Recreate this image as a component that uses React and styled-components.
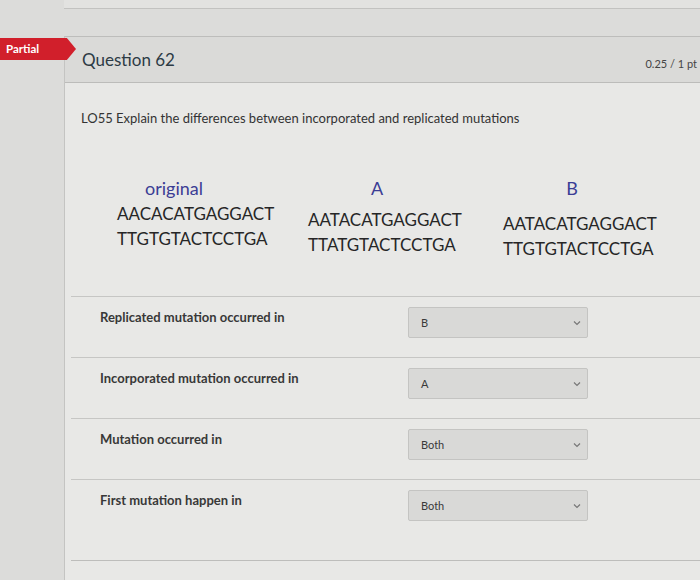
import React from 'react'
import styled, { createGlobalStyle } from 'styled-components'

const GlobalStyle = createGlobalStyle`
  html, body {
    margin: 0;
    padding: 0;
    background: #dcdcda;
    font-family: Lato, "Open Sans", "Liberation Sans", sans-serif;
    overflow: hidden;
  }
`

const Page = styled.div`
  width: 700px;
  height: 580px;
  display: flex;
  flex-direction: column;
  overflow: hidden;
`

const PrevEdge = styled.div`
  height: 8px;
  margin-left: 64px;
  border-bottom: 1px solid #c2c2c0;
  background: #e2e2e0;
  flex-shrink: 0;
`

const Row = styled.div`
  display: flex;
  flex: 1;
  margin-top: 27px;
`

const Gutter = styled.div`
  width: 64px;
  flex-shrink: 0;
  padding-top: 2px;
  position: relative;
  z-index: 1;
`

const Badge = styled.div`
  width: 76px;
  height: 22px;
  padding-left: 6px;
  box-sizing: border-box;
  background: #d11f2b;
  color: #fff;
  font-size: 11.5px;
  font-weight: 700;
  line-height: 22px;
  clip-path: polygon(0 0, 88% 0, 100% 50%, 88% 100%, 0 100%);
`

const Card = styled.div`
  flex: 1;
  min-width: 0;
  border-left: 1px solid #c4c4c2;
  border-top: 1px solid #bdbdbb;
  background: #e8e8e6;
  display: flex;
  flex-direction: column;
`

const Header = styled.div`
  height: 45px;
  display: flex;
  align-items: center;
  justify-content: space-between;
  padding: 0 3px 0 17px;
  background: #dadad8;
  border-bottom: 1px solid #bcbcba;
`

const Title = styled.h2`
  margin: 0;
  font-size: 17px;
  font-weight: 400;
  color: #2d3b45;
`

const Points = styled.span`
  font-size: 11px;
  color: #444;
  margin-top: 8px;
  white-space: nowrap;
`

const Body = styled.div`
  padding: 27px 0 0 10px;
`

const Prompt = styled.p`
  margin: 0 0 50px 6px;
  font-size: 13px;
  color: #333;
`

const Strands = styled.div`
  display: grid;
  grid-template-columns: 191px 195px 200px;
  margin-left: 42px;
  margin-bottom: 35px;
`

const Strand = styled.div`
  display: flex;
  flex-direction: column;
  font-size: 17px;
  line-height: 25px;
  color: #262626;
`

const StrandLabel = styled.span`
  font-size: 18px;
  color: #3b3d95;
  text-align: center;
  padding-right: ${p => p.$shift}px;
`

const Sequence = styled.div`
  display: flex;
  flex-direction: column;
  margin-top: ${p => p.$drop}px;
`

const Answers = styled.div`
  margin-left: -4px;
  border-bottom: 1px solid #bdbdbb;
  padding-bottom: 20px;
`

const AnswerRow = styled.div`
  display: flex;
  align-items: flex-start;
  height: 61px;
  box-sizing: border-box;
  padding: 10px 0 0 29px;
  border-top: 1px solid #c6c6c4;
`

const AnswerLabel = styled.span`
  width: 308px;
  flex-shrink: 0;
  margin-top: 2px;
  font-size: 13px;
  font-weight: 700;
  color: #383838;
`

const Select = styled.div`
  width: 180px;
  height: 31px;
  box-sizing: border-box;
  display: flex;
  align-items: center;
  justify-content: space-between;
  padding: 0 6px 0 12px;
  background: #d9d9d7;
  border: 1px solid #c4c4c2;
  border-radius: 2px;
  font-size: 11px;
  color: #3a3a3a;
`

const Chevron = () => (
  <svg width="8" height="6" viewBox="0 0 8 6">
    <polyline points="1,1.5 4,4.5 7,1.5" fill="none" stroke="#777" strokeWidth="1.2" />
  </svg>
)

const strands = [
  { label: 'original', shift: 77, drop: 0, top: 'AACACATGAGGACT', bottom: 'TTGTGTACTCCTGA' },
  { label: 'A', shift: 57, drop: 6, top: 'AATACATGAGGACT', bottom: 'TTATGTACTCCTGA' },
  { label: 'B', shift: 62, drop: 10, top: 'AATACATGAGGACT', bottom: 'TTGTGTACTCCTGA' },
]

const answers = [
  { label: 'Replicated mutation occurred in', value: 'B' },
  { label: 'Incorporated mutation occurred in', value: 'A' },
  { label: 'Mutation occurred in', value: 'Both' },
  { label: 'First mutation happen in', value: 'Both' },
]

export default function App() {
  return (
    <Page>
      <GlobalStyle />
      <PrevEdge />
      <Row>
        <Gutter>
          <Badge>Partial</Badge>
        </Gutter>
        <Card>
          <Header>
            <Title>Question 62</Title>
            <Points>0.25 / 1 pt</Points>
          </Header>
          <Body>
            <Prompt>LO55 Explain the differences between incorporated and replicated mutations</Prompt>
            <Strands>
              {strands.map(s => (
                <Strand key={s.label}>
                  <StrandLabel $shift={s.shift}>{s.label}</StrandLabel>
                  <Sequence $drop={s.drop}>
                    <span>{s.top}</span>
                    <span>{s.bottom}</span>
                  </Sequence>
                </Strand>
              ))}
            </Strands>
            <Answers>
              {answers.map(a => (
                <AnswerRow key={a.label}>
                  <AnswerLabel>{a.label}</AnswerLabel>
                  <Select>
                    <span>{a.value}</span>
                    <Chevron />
                  </Select>
                </AnswerRow>
              ))}
            </Answers>
          </Body>
        </Card>
      </Row>
    </Page>
  )
}
